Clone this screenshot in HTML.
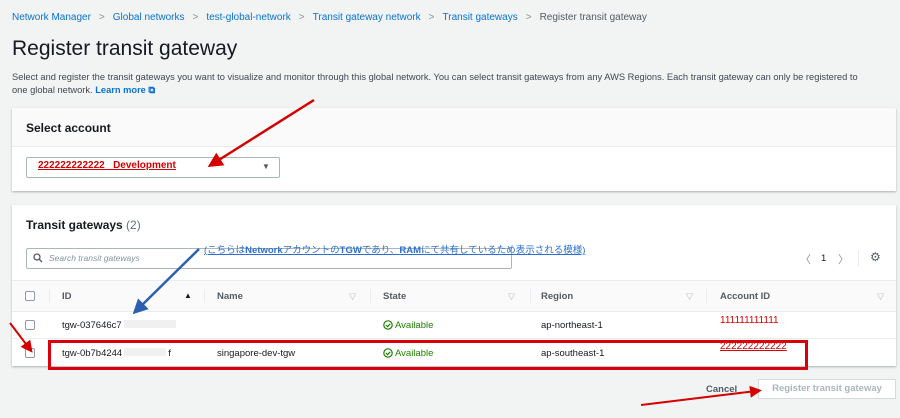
<!DOCTYPE html>
<html><head><meta charset="utf-8"><style>
*{box-sizing:border-box;margin:0;padding:0}
body{width:900px;height:418px;background:#f2f3f3;font-family:"Liberation Sans","Noto Sans CJK JP",sans-serif;color:#16191f;position:relative;overflow:hidden}
.a{position:absolute;white-space:nowrap}
.bc{top:12px;left:12px;font-size:10px;color:#0972d3}
.bc span.s{color:#879596;margin:0 8px}
.bc span.c{color:#545b64}
.card{position:absolute;left:12px;width:884px;background:#fff;box-shadow:0 1px 2px rgba(0,28,36,.3);}
.cb{position:absolute;width:10px;height:10px;border:1px solid #8d99a8;border-radius:2px;background:#fff}
.th{font-size:9.5px;font-weight:bold;color:#545b64}
.td{font-size:9.5px;color:#16191f}
.sep{position:absolute;width:1px;height:14px;background:#e9ebed;top:289px}
.tri{font-size:7px;color:#879596}
.av{font-size:9.5px;color:#1d8102}
.av svg{vertical-align:-2px;margin-right:2px}
</style></head><body>
<div class="a bc">Network Manager<span class="s">&gt;</span>Global networks<span class="s">&gt;</span>test-global-network<span class="s">&gt;</span>Transit gateway network<span class="s">&gt;</span>Transit gateways<span class="s">&gt;</span><span class="c">Register transit gateway</span></div>
<div class="a" style="top:37px;left:12px;font-size:21px">Register transit gateway</div>
<div class="a" style="top:71px;left:12px;font-size:9.3px;color:#414750;line-height:13px">Select and register the transit gateways you want to visualize and monitor through this global network. You can select transit gateways from any AWS Regions. Each transit gateway can only be registered to<br>one global network. <span style="color:#0972d3;font-weight:bold">Learn more ⧉</span></div>

<div class="card" style="top:108px;height:83px">
<div style="height:39px;background:#fafafa;border-bottom:1px solid #eaeded"></div>
</div>
<div class="a" style="top:121px;left:26px;font-size:12px;font-weight:bold">Select account</div>
<div class="a" style="top:157px;left:26px;width:254px;height:21px;border:1px solid #aab7b8;border-radius:2px;background:#fff"></div>
<div class="a" style="top:160px;left:38px;font-size:10px;color:#d40000;text-decoration:underline;font-weight:bold">222222222222 &nbsp;&nbsp;Development</div>
<div class="a" style="top:162px;left:262px;font-size:8px;color:#545b64">▼</div>

<div class="card" style="top:205px;height:161px"></div>
<div class="a" style="top:218px;left:26px;font-size:12px;font-weight:bold">Transit gateways <span style="font-weight:normal;color:#687078">(2)</span></div>
<div class="a" style="top:248px;left:26px;width:486px;height:21px;border:1px solid #aab7b8;border-radius:2px;background:#fff"></div>
<svg class="a" style="top:253px;left:33px" width="10" height="10"><circle cx="4" cy="4" r="3" fill="none" stroke="#545b64" stroke-width="1.3"/><path d="M6 6l3 3" stroke="#545b64" stroke-width="1.3"/></svg>
<div class="a" style="top:253px;left:49px;font-size:8.5px;font-style:italic;color:#879596">Search transit gateways</div>
<div class="a" style="top:251px;left:800px;font-size:11px;color:#879596">〈</div>
<div class="a" style="top:253px;left:821px;font-size:9.5px">1</div>
<div class="a" style="top:251px;left:838px;font-size:11px;color:#879596">〉</div>
<div class="a" style="top:250px;left:858px;width:1px;height:16px;background:#e9ebed"></div>
<div class="a" style="top:250px;left:870px;font-size:12px;color:#545b64">⚙</div>
<div class="a" style="top:242px;left:204px;font-size:9.5px;color:#2c6fd0;text-decoration:underline">(こちらは<b>Network</b>アカウントの<b>TGW</b>であり、<b>RAM</b>にて共有しているため表示される模様)</div>

<div class="a" style="top:280px;left:12px;width:884px;height:32px;background:#fafafa;border-top:1px solid #eaeded;border-bottom:1px solid #eaeded"></div>
<div class="cb" style="left:25px;top:291px"></div>
<div class="sep" style="left:49px"></div><div class="sep" style="left:204px"></div><div class="sep" style="left:370px"></div><div class="sep" style="left:530px"></div><div class="sep" style="left:706px"></div>
<div class="a th" style="top:291px;left:62px">ID</div>
<div class="a" style="top:291px;left:184px;font-size:8px">▲</div>
<div class="a th" style="top:291px;left:217px">Name</div><div class="a tri" style="top:292px;left:349px">▽</div>
<div class="a th" style="top:291px;left:383px">State</div><div class="a tri" style="top:292px;left:508px">▽</div>
<div class="a th" style="top:291px;left:541px">Region</div><div class="a tri" style="top:292px;left:686px">▽</div>
<div class="a th" style="top:291px;left:720px">Account ID</div><div class="a tri" style="top:292px;left:877px">▽</div>

<div class="a" style="top:338px;left:12px;width:884px;height:1px;background:#eaeded"></div>
<div class="cb" style="left:25px;top:320px"></div>
<div class="a td" style="top:320px;left:62px">tgw-037646c7<span style="display:inline-block;width:52px;height:8px;background:#f0f0f0;margin-left:2px"></span></div>
<div class="a av" style="top:320px;left:383px"><svg width="10" height="10"><circle cx="5" cy="5" r="4.2" fill="none" stroke="#1d8102" stroke-width="1.2"/><path d="M3 5l1.6 1.6L7.2 3.8" fill="none" stroke="#1d8102" stroke-width="1.2"/></svg>Available</div>
<div class="a td" style="top:320px;left:541px">ap-northeast-1</div>
<div class="a" style="top:315px;left:720px;font-size:10px;color:#d40000">111111111111</div>

<div class="cb" style="left:25px;top:348px"></div>
<div class="a td" style="top:348px;left:62px">tgw-0b7b4244<span style="display:inline-block;width:42px;height:8px;background:#f0f0f0;margin:0 2px"></span>f</div>
<div class="a td" style="top:348px;left:217px">singapore-dev-tgw</div>
<div class="a av" style="top:348px;left:383px"><svg width="10" height="10"><circle cx="5" cy="5" r="4.2" fill="none" stroke="#1d8102" stroke-width="1.2"/><path d="M3 5l1.6 1.6L7.2 3.8" fill="none" stroke="#1d8102" stroke-width="1.2"/></svg>Available</div>
<div class="a td" style="top:348px;left:541px">ap-southeast-1</div>
<div class="a" style="top:341px;left:720px;font-size:10px;color:#d40000;text-decoration:underline">222222222222</div>
<div class="a" style="top:340px;left:48px;width:760px;height:30px;border:3px solid #d9000b"></div>

<div class="a" style="top:384px;left:706px;font-size:9.5px;font-weight:bold;color:#545b64">Cancel</div>
<div class="a" style="top:379px;left:758px;width:138px;height:20px;border:1px solid #d5dbdb;background:#fff;font-size:9.5px;color:#aab7b8;text-align:center;line-height:18px;font-weight:bold">Register transit gateway</div>

<svg class="a" style="top:0;left:0" width="900" height="418">
<defs><marker id="r" markerWidth="6" markerHeight="6" refX="3" refY="3" orient="auto"><path d="M0 0L6 3L0 6z" fill="#d40000"/></marker>
<marker id="b" markerWidth="6" markerHeight="6" refX="3" refY="3" orient="auto"><path d="M0 0L6 3L0 6z" fill="#2c5fb0"/></marker></defs>
<line x1="314" y1="100" x2="214" y2="163" stroke="#d40000" stroke-width="2.5" marker-end="url(#r)"/>
<line x1="199" y1="249" x2="138" y2="309" stroke="#2c5fb0" stroke-width="2.5" marker-end="url(#b)"/>
<line x1="10" y1="323" x2="29" y2="348" stroke="#d40000" stroke-width="2" marker-end="url(#r)"/>
<line x1="641" y1="405" x2="756" y2="391" stroke="#d40000" stroke-width="2" marker-end="url(#r)"/>
</svg>
</body></html>
